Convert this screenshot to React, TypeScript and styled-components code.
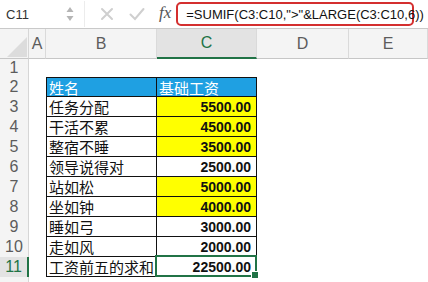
import React from 'react'
import styled, { createGlobalStyle } from 'styled-components'

const GlobalStyle = createGlobalStyle`
  html, body {
    margin: 0;
    padding: 0;
    background: #ffffff;
  }
  body {
    font-family: "Liberation Sans", Arial, sans-serif;
    overflow: hidden;
  }
`

type Row = {
  name: string
  value: string
  yellow?: boolean
}

const rows: Row[] = [
  { name: '任务分配', value: '5500.00', yellow: true },
  { name: '干活不累', value: '4500.00', yellow: true },
  { name: '整宿不睡', value: '3500.00', yellow: true },
  { name: '领导说得对', value: '2500.00' },
  { name: '站如松', value: '5000.00', yellow: true },
  { name: '坐如钟', value: '4000.00', yellow: true },
  { name: '睡如弓', value: '3000.00' },
  { name: '走如风', value: '2000.00' },
]

const GREEN = '#217346'

const App: React.FC = () => {
  return (
    <Page>
      <GlobalStyle />
      <FormulaBar>
        <NameBox>C11</NameBox>
        <Spinner>
          <svg width="8" height="16" viewBox="0 0 8 16">
            <path d="M4 1 L7.5 6 L0.5 6 Z" fill="#b5b5b5" />
            <path d="M4 15 L7.5 10 L0.5 10 Z" fill="#b5b5b5" />
          </svg>
        </Spinner>
        <Divider />
        <BarIcon>
          <svg width="14" height="14" viewBox="0 0 14 14">
            <path d="M2 2 L12 12 M12 2 L2 12" stroke="#cfcfcf" strokeWidth="2" strokeLinecap="round" />
          </svg>
        </BarIcon>
        <BarIcon>
          <svg width="16" height="14" viewBox="0 0 16 14">
            <path d="M1.5 7.5 L6 12 L14.5 2" stroke="#cfcfcf" strokeWidth="2" fill="none" strokeLinecap="round" />
          </svg>
        </BarIcon>
        <Fx>fx</Fx>
        <Formula>=SUMIF(C3:C10,"&gt;"&amp;LARGE(C3:C10,6))</Formula>
      </FormulaBar>
      <Sheet>
        <Corner>
          <svg width="24" height="24" viewBox="0 0 24 24">
            <path d="M23 3 L23 23 L3 23 Z" fill="#dcdcdc" />
          </svg>
        </Corner>
        {['A', 'B', 'C', 'D', 'E'].map((col) => (
          <ColHead key={col} $active={col === 'C'}>
            {col}
          </ColHead>
        ))}

        <RowHead>1</RowHead>
        <Cell />
        <Cell />
        <Cell />
        <Cell />
        <Cell />

        <RowHead>2</RowHead>
        <Cell />
        <TableCell $first $top $fill="#1fa0e2" $white>
          姓名
        </TableCell>
        <TableCell $top $fill="#1fa0e2" $white>
          基础工资
        </TableCell>
        <Cell />
        <Cell />

        {rows.map((row, i) => (
          <React.Fragment key={row.name}>
            <RowHead>{i + 3}</RowHead>
            <Cell />
            <TableCell $first>{row.name}</TableCell>
            <TableCell $num $fill={row.yellow ? '#ffff00' : undefined}>
              {row.value}
            </TableCell>
            <Cell />
            <Cell />
          </React.Fragment>
        ))}

        <RowHead $active>11</RowHead>
        <Cell />
        <TableCell $first>工资前五的求和</TableCell>
        <TableCell $num>
          22500.00
          <Selection>
            <Handle />
          </Selection>
        </TableCell>
        <Cell />
        <Cell />

        <RowHead />
        <Cell />
        <Cell />
        <Cell />
        <Cell />
        <Cell />
      </Sheet>
    </Page>
  )
}

const Page = styled.div`
  width: 428px;
  height: 282px;
  overflow: hidden;
  background: #ffffff;
`

const FormulaBar = styled.div`
  display: flex;
  align-items: center;
  height: 29px;
  box-sizing: border-box;
  border-bottom: 1px solid #c9c9c9;
  background: #ffffff;
`

const NameBox = styled.div`
  width: 66px;
  padding-left: 6px;
  box-sizing: border-box;
  font-size: 13px;
  color: #333333;
`

const Spinner = styled.div`
  display: flex;
  align-items: center;
  width: 10px;
`

const Divider = styled.div`
  width: 1px;
  height: 26px;
  margin: 0 14px 0 8px;
  background: #ececec;
`

const BarIcon = styled.div`
  display: flex;
  align-items: center;
  justify-content: center;
  width: 16px;
  margin-right: 14px;
`

const Fx = styled.div`
  font-family: "Liberation Serif", "Times New Roman", serif;
  font-style: italic;
  font-size: 17px;
  color: #555555;
  margin: -2px 5px 0 0;
`

const Formula = styled.div`
  height: 24px;
  width: 238px;
  box-sizing: border-box;
  border: 2px solid #d42f2f;
  border-radius: 5px;
  display: flex;
  align-items: center;
  padding-left: 8px;
  font-size: 13px;
  color: #111111;
  white-space: nowrap;
`

const Sheet = styled.div`
  display: grid;
  grid-template-columns: 29px 17px 111px 100px 92px 1fr;
  grid-template-rows: 30px 18px repeat(10, 20px) 10px;
`

const Corner = styled.div`
  background: #f4f4f4;
  border-right: 1px solid #d6d6d6;
  border-bottom: 1px solid #c6c6c6;
  box-sizing: border-box;
  display: flex;
  align-items: flex-end;
  justify-content: flex-end;
  overflow: hidden;
`

const ColHead = styled.div<{ $active?: boolean }>`
  display: flex;
  align-items: center;
  justify-content: center;
  box-sizing: border-box;
  font-size: 16px;
  color: ${(p) => (p.$active ? GREEN : '#5c5c5c')};
  background: ${(p) => (p.$active ? '#e3e3e3' : '#f4f4f4')};
  border-right: 1px solid #dadada;
  border-bottom: ${(p) => (p.$active ? `2px solid ${GREEN}` : '1px solid #c6c6c6')};
`

const RowHead = styled.div<{ $active?: boolean }>`
  display: flex;
  align-items: center;
  justify-content: center;
  box-sizing: border-box;
  font-size: 16px;
  color: ${(p) => (p.$active ? GREEN : '#5c5c5c')};
  background: ${(p) => (p.$active ? '#e3e3e3' : '#f4f4f4')};
  border-right: ${(p) => (p.$active ? `2px solid ${GREEN}` : '1px solid #d6d6d6')};
`

const Cell = styled.div`
  background: #ffffff;
`

const TableCell = styled.div<{
  $first?: boolean
  $top?: boolean
  $num?: boolean
  $white?: boolean
  $fill?: string
}>`
  position: relative;
  display: flex;
  align-items: center;
  justify-content: ${(p) => (p.$num ? 'flex-end' : 'flex-start')};
  box-sizing: border-box;
  padding: ${(p) => (p.$num ? '0 5px 0 0' : '0 0 0 2px')};
  background: ${(p) => p.$fill || '#ffffff'};
  border-right: 1px solid #111111;
  border-bottom: 1px solid #111111;
  border-left: ${(p) => (p.$first ? '1px solid #111111' : 'none')};
  border-top: ${(p) => (p.$top ? '1px solid #111111' : 'none')};
  font-family: ${(p) =>
    p.$num ? '"Liberation Sans", Arial, sans-serif' : '"Noto Sans CJK SC", "Noto Sans", sans-serif'};
  font-weight: ${(p) => (p.$num ? 700 : 400)};
  font-size: ${(p) => (p.$num ? '14px' : '15px')};
  color: ${(p) => (p.$white ? '#ffffff' : '#111111')};
  white-space: nowrap;
`

const Selection = styled.div`
  position: absolute;
  left: -2px;
  top: -2px;
  right: -1px;
  bottom: -1px;
  border: 2px solid ${GREEN};
  pointer-events: none;
`

const Handle = styled.div`
  position: absolute;
  right: -4px;
  bottom: -4px;
  width: 6px;
  height: 6px;
  background: ${GREEN};
  border: 1px solid #ffffff;
`

export default App
